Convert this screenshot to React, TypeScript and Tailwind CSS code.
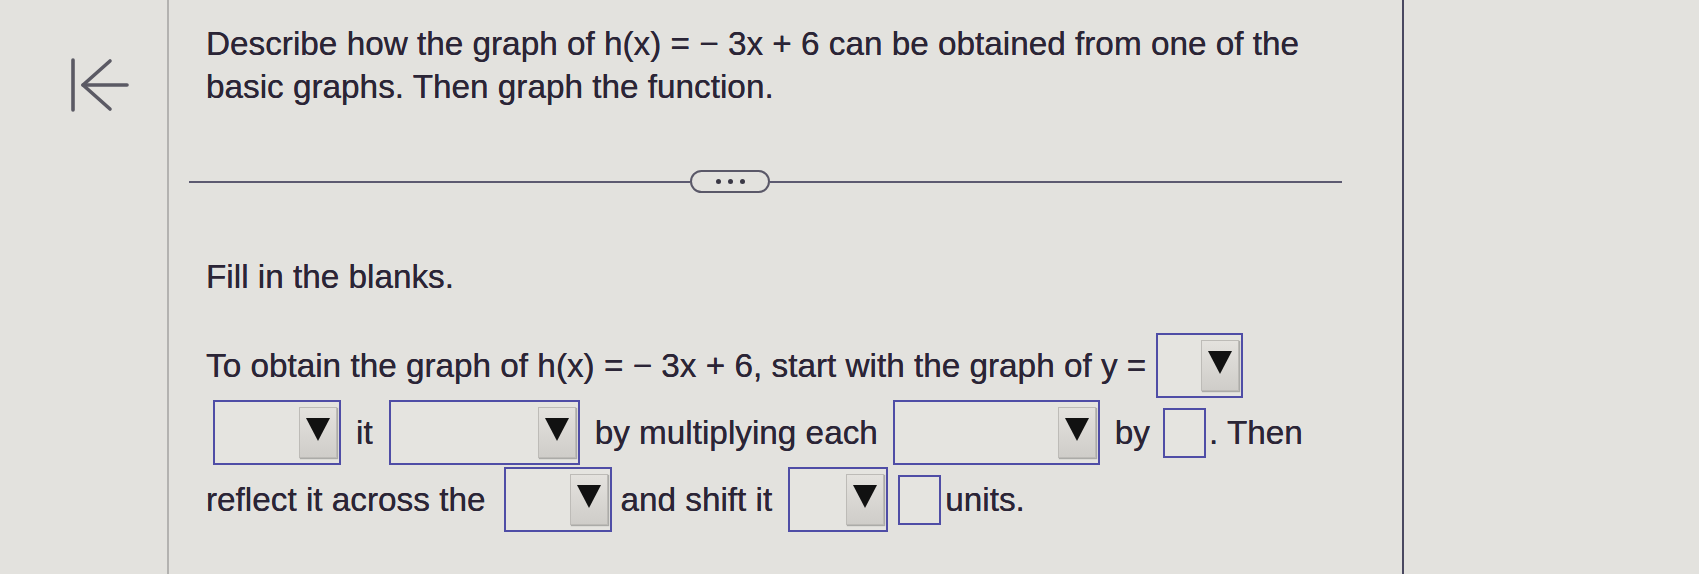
import React from "react";

const TEXT = "text-[#2b2536]";

function Dropdown({ w }: { w: string }) {
  return (
    <div className={`${w} h-[65px] shrink-0 border-2 border-[#4f4da6] bg-[#e5e4e0] flex justify-end items-center pr-[2px]`}>
      <div className="w-[38px] h-[51px] bg-gradient-to-b from-[#e4e2de] to-[#cfcdc9] border border-[#bdbbb7] shadow-[1px_1px_1px_rgba(0,0,0,0.25)] flex justify-center pt-[10px]">
        <svg width="24" height="23" viewBox="0 0 24 23">
          <polygon points="0,0 24,0 12,23" fill="#111" />
        </svg>
      </div>
    </div>
  );
}

function Box() {
  return <div className="w-[43px] h-[50px] shrink-0 border-2 border-[#4f4da6] bg-[#e5e4e0]" />;
}

export default function App() {
  return (
    <div
      className={`flex w-[1699px] h-[574px] bg-[#e3e2de] ${TEXT} overflow-hidden [text-shadow:0_0_0.6px_#2b2536]`}
      style={{ fontFamily: '"Liberation Sans", Arial, Helvetica, sans-serif' }}
    >
      {/* left column */}
      <div className="w-[169px] shrink-0 border-r-2 border-[#b3b2b0] pt-[57px] pl-[68px]">
        <svg width="62" height="56" viewBox="0 0 62 56" fill="none" stroke="#5b5a64" strokeWidth="3.6" strokeLinecap="round" strokeLinejoin="round">
          <line x1="5" y1="3" x2="5" y2="53" />
          <line x1="15" y1="28" x2="59" y2="28" />
          <polyline points="42,4 15,28 42,52" />
        </svg>
      </div>

      {/* main column */}
      <div className="w-[1235px] shrink-0 border-r-2 border-[#4a4860] flex flex-col">
        <div className="pl-[37px] pt-[22px] text-[33.3px] leading-[43px]">
          Describe how the graph of h(x) = − 3x + 6 can be obtained from one of the
          <br />
          basic graphs. Then graph the function.
        </div>

        <div className="mt-[62px] ml-[20px] w-[1153px] h-[23px] flex items-center">
          <div className="w-[501px] h-[2px] bg-[#5c5a70]" />
          <div className="w-[80px] h-[23px] rounded-full border-2 border-[#5a5868] flex items-center justify-center gap-[7px]">
            <span className="w-[5px] h-[5px] rounded-full bg-[#3a3845]" />
            <span className="w-[5px] h-[5px] rounded-full bg-[#3a3845]" />
            <span className="w-[5px] h-[5px] rounded-full bg-[#3a3845]" />
          </div>
          <div className="flex-1 h-[2px] bg-[#5c5a70]" />
        </div>

        <div className="mt-[62px] pl-[37px] text-[33.3px] leading-[43px]">Fill in the blanks.</div>

        <div className="mt-[34px] pl-[37px] text-[33.3px] leading-[43px] whitespace-nowrap">
          <div className="h-[67px] flex items-center">
            <span>To obtain the graph of h(x) = − 3x + 6, start with the graph of y =</span>
            <div className="ml-[10px]"><Dropdown w="w-[87px]" /></div>
          </div>
          <div className="h-[67px] flex items-center">
            <div className="ml-[7px]"><Dropdown w="w-[128px]" /></div>
            <span className="ml-[15px]">it</span>
            <div className="ml-[16px]"><Dropdown w="w-[191px]" /></div>
            <span className="ml-[15px]">by multiplying each</span>
            <div className="ml-[15px]"><Dropdown w="w-[207px]" /></div>
            <span className="ml-[15px]">by</span>
            <div className="ml-[13px]"><Box /></div>
            <span className="ml-[3px]">. Then</span>
          </div>
          <div className="h-[67px] flex items-center">
            <span>reflect it across the</span>
            <div className="ml-[19px]"><Dropdown w="w-[108px]" /></div>
            <span className="ml-[8px]">and shift it</span>
            <div className="ml-[16px]"><Dropdown w="w-[100px]" /></div>
            <div className="ml-[10px]"><Box /></div>
            <span className="ml-[4px]">units.</span>
          </div>
        </div>
      </div>

      <div className="flex-1" />
    </div>
  );
}
